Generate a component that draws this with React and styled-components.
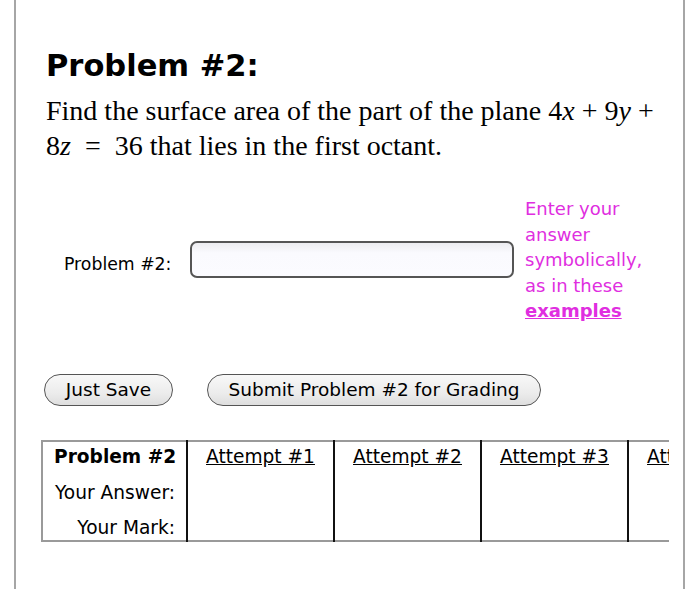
import React from "react";
import styled, { createGlobalStyle } from "styled-components";

const Global = createGlobalStyle`
  html, body { margin: 0; padding: 0; background: #fff; }
  body { font-family: "DejaVu Sans", Verdana, sans-serif; color: #000; }
`;

const Frame = styled.div`
  box-sizing: border-box;
  margin-left: 14px;
  width: 671px;
  height: 589px;
  border-left: 2px solid #a6a6a6;
  border-right: 2px solid #a6a6a6;
  padding: 0 0 0 30px;
  overflow: hidden;
`;

const Heading = styled.h1`
  margin: 48px 0 0 0;
  font-family: "DejaVu Sans", Verdana, sans-serif;
  font-weight: bold;
  font-size: 30.5px;
  line-height: 36px;
`;

const Question = styled.p`
  margin: 9px 0 0 0;
  width: 625px;
  font-family: "Liberation Serif", "Times New Roman", serif;
  font-size: 28px;
  line-height: 35px;
`;

const Var = styled.i``;

const FormRow = styled.div`
  display: flex;
  align-items: center;
  margin: 33px 0 0 18px;
`;

const Label = styled.label`
  font-size: 17.3px;
  width: 107px;
  margin: 8px 19px 0 0;
  white-space: nowrap;
`;

const Input = styled.input`
  box-sizing: border-box;
  width: 324px;
  height: 37px;
  border: 2px solid #555;
  border-radius: 7px;
  background: linear-gradient(#ececf0, #fafafe 30%, #fbfbff);
  margin-right: 11px;
`;

const Hint = styled.div`
  width: 128px;
  font-size: 18px;
  line-height: 25.5px;
  color: #e02ee0;
`;

const HintLink = styled.a`
  color: #e02ee0;
  font-weight: bold;
  text-decoration: underline;
`;

const Buttons = styled.div`
  display: flex;
  gap: 34px;
  margin: 50px 0 0 -2px;
`;

const Button = styled.button`
  box-sizing: border-box;
  height: 32px;
  width: ${(p) => p.$w}px;
  border: 1.5px solid #555;
  border-radius: 16px;
  background: linear-gradient(#f8f8f8, #ececec 60%, #dedede);
  font-family: "DejaVu Sans", Verdana, sans-serif;
  font-size: 18.5px;
  color: #000;
  padding: 0;
  white-space: nowrap;
`;

const TableWrap = styled.div`
  margin: 34px 0 0 -5px;
  width: 628px;
  overflow: hidden;
`;

const Table = styled.table`
  border-collapse: collapse;
  width: 733px;
  border-top: 2px solid #9a9a9a;
  border-bottom: 2px solid #9a9a9a;
  border-left: 2px solid #9a9a9a;
  font-size: 18.6px;
  line-height: 22px;
  white-space: nowrap;
  table-layout: fixed;
`;

const Col = styled.col`
  width: ${(p) => p.$w}px;
`;

const HeadCell = styled.th`
  height: 32px;
  padding: 4px 11px 0;
  font-weight: ${(p) => (p.$bold ? "bold" : "normal")};
  text-align: ${(p) => (p.$right ? "right" : "center")};
  border-right: 2px solid #111;
  vertical-align: top;
`;

const AttemptLink = styled.a`
  color: #000;
  text-decoration: underline;
`;

const RowLabel = styled.td`
  height: ${(p) => p.$h}px;
  padding: 4px 11px 0;
  text-align: right;
  vertical-align: top;
  border-right: 2px solid #111;
`;

const Cell = styled.td`
  border-right: 2px solid #111;
`;

const attempts = ["Attempt #1", "Attempt #2", "Attempt #3", "Attempt #4"];

export default function App() {
  return (
    <>
      <Global />
      <Frame>
        <Heading>Problem #2:</Heading>
        <Question>
          Find the surface area of the part of the plane 4<Var>x</Var> + 9<Var>y</Var> +
          8<Var>z</Var> &nbsp;=&nbsp; 36 that lies in the first octant.
        </Question>
        <FormRow>
          <Label>Problem #2:</Label>
          <Input type="text" />
          <Hint>
            Enter your answer symbolically, as in these{" "}
            <HintLink href="#">examples</HintLink>
          </Hint>
        </FormRow>
        <Buttons>
          <Button $w={129}>Just Save</Button>
          <Button $w={334}>Submit Problem #2 for Grading</Button>
        </Buttons>
        <TableWrap>
          <Table>
            <colgroup>
              <Col $w={145} />
              {attempts.map((a) => (
                <Col key={a} $w={147} />
              ))}
            </colgroup>
            <thead>
              <tr>
                <HeadCell $bold $right>Problem #2</HeadCell>
                {attempts.map((a) => (
                  <HeadCell key={a}>
                    <AttemptLink href="#">{a}</AttemptLink>
                  </HeadCell>
                ))}
              </tr>
            </thead>
            <tbody>
              <tr>
                <RowLabel $h={31}>Your Answer:</RowLabel>
                {attempts.map((a) => <Cell key={a} />)}
              </tr>
              <tr>
                <RowLabel $h={23}>Your Mark:</RowLabel>
                {attempts.map((a) => <Cell key={a} />)}
              </tr>
            </tbody>
          </Table>
        </TableWrap>
      </Frame>
    </>
  );
}
